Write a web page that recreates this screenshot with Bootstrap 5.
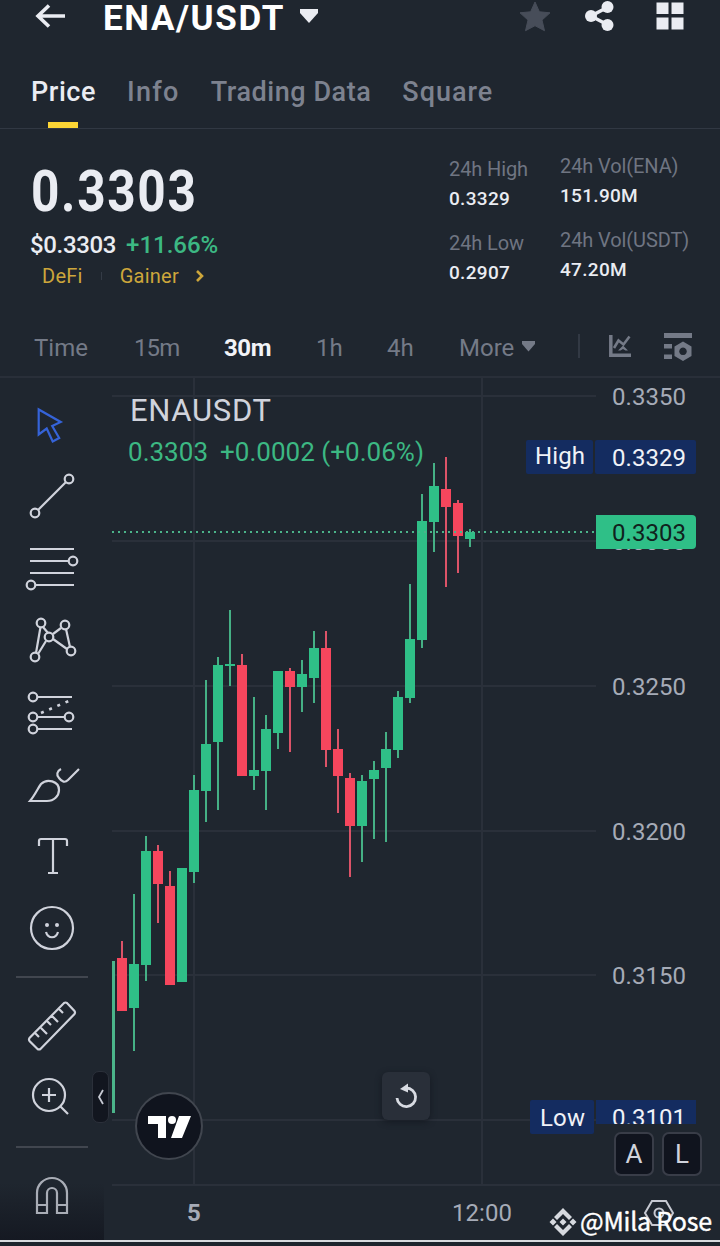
<!DOCTYPE html>
<html lang="en">
<head>
<meta charset="utf-8">
<meta name="viewport" content="width=device-width, initial-scale=1">
<title>ENA/USDT</title>
<link rel="stylesheet" href="https://cdn.jsdelivr.net/npm/bootstrap@5.3.0/dist/css/bootstrap.min.css">
<style>
  body { background: #1f262f; color: #eaecf2; font-family: Roboto, "Noto Sans", sans-serif; width: 720px; height: 1246px; overflow: hidden; }
  svg { display: block; flex: none; }
  .topbar { height: 36px; padding-left: 34px; }
  .pair { font-size: 35px; font-weight: 700; line-height: 34px; color: #fff; width: 190px; margin-left: 37px; padding-top: 2px; letter-spacing: 1.6px; white-space: nowrap; }
  .tabs { height: 93px; border-bottom: 1px solid #313843; padding: 0 31px; gap: 31px; }
  .tabs a { color: #7d828f; font-size: 27px; line-height: 36px; font-weight: 500; padding: 38px 0 0; letter-spacing: .55px; white-space: nowrap; }
  .tabs a.active { color: #eaecf2; position: relative; }
  .tabs a.active::after { content: ""; position: absolute; left: 17px; bottom: 0; width: 30px; height: 6px; background: #fcd535; }
  .tabs .info { letter-spacing: 1.3px; }
  .tabs .square { letter-spacing: 1px; }
  .summary { height: 187px; padding: 32px 0 0 31px; }
  .last { font-size: 57px; font-weight: 700; line-height: 60px; padding-top: 1px; letter-spacing: 1.9px; transform: scaleX(.87); transform-origin: 0 0; }
  .sub { font-size: 24px; line-height: 30px; font-weight: 500; margin: 8px 0 0 -1px; letter-spacing: -.35px; }
  .sub .up { letter-spacing: 0; }
  .up { color: #3cb883; }
  .tags { color: #cda63b; font-size: 20px; line-height: 30px; padding-left: 11px; margin-top: 1px; letter-spacing: .25px; }
  .rule { width: 1px; height: 8px; background: #343b46; margin: 0 18px; }
  .stat { font-size: 20px; line-height: 28px; color: #6f7582; white-space: nowrap; height: 74px; letter-spacing: -.1px; }
  .stat b { display: block; font-weight: 500; color: #eaecf2; font-size: 19px; line-height: 31px; letter-spacing: .3px; }
  .frames { height: 62px; border-bottom: 2px solid #292f39; color: #747a87; font-size: 24px; line-height: 36px; padding: 14px 0 0 34px; }
  .frames span { flex: none; }
  .frames .m15 { letter-spacing: -.9px; }
  .frames .on { color: #f2f3f7; font-weight: 700; letter-spacing: -.4px; }
  .tools { width: 104px; height: 862px; padding-top: 10px; background: linear-gradient(#1f262f 0, #1f262f 805px, #151922 862px); }
  .tools hr { margin: 12px 16px; border: 0; height: 2px; background: #41464f; opacity: 1; }
  .tools svg { fill: none; stroke: #d0d3dc; stroke-width: 2.2; }
  .foot { height: 6px; border-top: 2px solid #d8dade; background: #1d242d; }
  .round-logo { left: 135px; top: 714px; width: 68px; height: 68px; border: 2px solid #41464f; background: #10141e; }
  .reset { left: 382px; top: 694px; width: 48px; height: 48px; border-radius: 6px; background: #292f39; box-shadow: 0 2px 6px #151a22; }
  .handle { left: 92px; top: 693px; width: 17px; height: 52px; border-radius: 7px; background: #12161f; border: 1px solid #2b303a; }
  .key { top: 754px; width: 40px; height: 44px; border: 2px solid #393d48; border-radius: 7px; background: #10141e; color: #d0d3dc; font-size: 26px; line-height: 40px; }
</style>
</head>
<body class="m-0">
<header class="topbar d-flex align-items-center">
  <svg width="32" height="36" viewBox="34 0 32 36" fill="none" stroke="#eaecf2" stroke-width="3.6"><path d="M65 16H38M49 5.500L38 16l11 10.500"/></svg>
  <div class="pair">ENA/USDT</div>
  <svg width="26" height="36" viewBox="293 0 26 36"><path d="M300 9h18v4l-9 10-9-10z" fill="#eaecf2"/></svg>
  <svg class="ms-auto" width="204" height="36" viewBox="516 0 204 36">
    <path d="M535 2l4.400 9.800 10.600 1-8 7.300 2.500 10.600-9.500-5-9.500 5 2.500-10.600-8-7.300 10.600-1z" fill="#474d59" stroke="#474d59" stroke-linejoin="round"/>
    <path d="M608 7L591 16l17 9" fill="none" stroke="#eaecf2" stroke-width="3.500"/>
    <g fill="#eaecf2"><circle cx="607.500" cy="7" r="6"/><circle cx="591" cy="16" r="6"/><circle cx="607.500" cy="25" r="6"/>
    <path d="M656.500 2.500h12v11.500h-12zM671.500 2.500h12v11.500h-12zM656.500 17.500h12v12h-12zM671.500 17.500h12v12h-12z"/></g>
  </svg>
</header>
<nav class="tabs nav flex-nowrap">
  <a class="nav-link active">Price</a><a class="nav-link info">Info</a><a class="nav-link">Trading Data</a><a class="nav-link square">Square</a>
</nav>
<section class="summary d-flex">
  <div style="width:418px">
    <div class="last">0.3303</div>
    <div class="sub d-flex"><span>$0.3303</span><span class="up" style="margin-left:10px">+11.66%</span></div>
    <div class="tags d-flex align-items-center"><span>DeFi</span><span class="rule"></span><span>Gainer</span>
      <svg class="ms-3" width="10" height="14" viewBox="0 0 10 14" fill="none" stroke="#cda63b" stroke-width="2.600"><path d="M2 2l5 5-5 5"/></svg></div>
  </div>
  <div style="width:111px">
    <div class="stat" style="margin-top:-6px">24h High<b>0.3329</b></div>
    <div class="stat">24h Low<b>0.2907</b></div>
  </div>
  <div>
    <div class="stat" style="margin-top:-9px">24h Vol(ENA)<b>151.90M</b></div>
    <div class="stat">24h Vol(USDT)<b>47.20M</b></div>
  </div>
</section>
<div class="frames d-flex">
  <span style="width:100px">Time</span><span class="m15" style="width:90px">15m</span><span class="on" style="width:92px">30m</span><span style="width:71px">1h</span><span style="width:72px">4h</span><span style="width:62px">More</span>
  <svg width="199" height="46" viewBox="521 330 199 46">
    <path d="M522 341h13v3l-6.500 7.500L522 344z" fill="#747a87"/><path d="M579 334v24" stroke="#3a414c" stroke-width="1.500"/>
    <path d="M610.800 335v20.200H631" fill="none" stroke="#747a87" stroke-width="3.500"/><path d="M614 348l4.500-7.500 5 4 6-8" fill="none" stroke="#747a87" stroke-width="2.600"/><path d="M618 350.500l5-5 5 5-2.500 0-2.500-1.500-2.500 1.500z" fill="#747a87"/>
    <path d="M664 333h28v5h-28zM664 344h8v4.500h-8zM664 354.500h8v4.500h-8z" fill="#747a87"/>
    <path fill-rule="evenodd" d="M683 341.500l8.500 5v9.500l-8.500 5-8.500-5v-9.500zM683 347.500a3.800 3.800 0 1 0 .01 0z" fill="#747a87"/>
  </svg>
</div>
<main class="d-flex position-relative">
  <aside class="tools d-flex flex-column">
    <svg width="104" height="72" viewBox="0 388 104 72" style="stroke:#3563d8"><path d="M38.700 409.500v25l8-6 6 13 6.500-3.500-7-12 8.500-4z"/></svg>
    <svg width="104" height="72" viewBox="0 460 104 72"><path d="M38 510l28-28"/><circle cx="35" cy="513" r="4.300"/><circle cx="69" cy="479" r="4.300"/></svg>
    <svg width="104" height="72" viewBox="0 532 104 72"><path d="M30 549h44M30 561h38M30 573h44M36 585h38"/><circle cx="73" cy="561" r="4.300"/><circle cx="31" cy="585" r="4.300"/></svg>
    <svg width="104" height="72" viewBox="0 604 104 72"><path d="M40.500 627L36 653M43 627l5 6M38 654l8-13M53 634l8-6M66 629l4 18M53 639l14 10"/><circle cx="41" cy="623" r="4.300"/><circle cx="65" cy="625" r="4.300"/><circle cx="49" cy="637" r="4.300"/><circle cx="35" cy="657" r="4.300"/><circle cx="71" cy="651" r="4.300"/></svg>
    <svg width="104" height="72" viewBox="0 676 104 72"><path d="M37 697h35M37 717h28M37 729h35"/><path d="M41 713l30-13" stroke-width="2.600" stroke-dasharray="3 5.900"/><circle cx="33" cy="697" r="4.300"/><circle cx="33" cy="717" r="4.300"/><circle cx="69" cy="717" r="4.300"/><circle cx="33" cy="729" r="4.300"/></svg>
    <svg width="104" height="72" viewBox="0 748 104 72"><path d="M30 801c5-6 8-13 11-17 6-6 18-3 18 6 0 6-5 11-12 11zM61 769c-4 2-5 6-2 9 3 4 6 5 9 2l11-11"/></svg>
    <svg width="104" height="72" viewBox="0 820 104 72"><path d="M39 846v-5q0-2 2-2h24q2 0 2 2v5M53 839v34M48 873h10"/></svg>
    <svg width="104" height="72" viewBox="0 892 104 72"><circle cx="52" cy="928" r="21"/><path d="M46 932c2 7 10 7 12 0"/><circle cx="47" cy="925" r="2" fill="#d0d3dc" stroke="none"/><circle cx="57" cy="925" r="2" fill="#d0d3dc" stroke="none"/></svg>
    <hr>
    <svg width="104" height="72" viewBox="0 990 104 72"><path d="M64 1003q1.500-1 3 0l7.500 8q1 1.500 0 3l-34 35q-1.500 1-3 0l-8-8q-1-1.500 0-3zM35 1033l4 4M41 1028l6 6M47 1021l4 4M52 1016l6 6M59 1009l4 4"/></svg>
    <svg width="104" height="72" viewBox="0 1062 104 72"><circle cx="49" cy="1095" r="16"/><path d="M42 1095h14M49 1088v14M60 1106l8 8"/></svg>
    <hr>
    <svg width="104" height="72" viewBox="0 1160 104 72" style="stroke:#a9adb6"><path d="M37 1213v-20a15 15 0 0 1 30 0v20H57v-20a5 5 0 0 0-10 0v20zM37 1205h10M57 1205h10"/></svg>
  </aside>
  <svg id="chart" width="616" height="862" viewBox="104 378 616 862" font-family="Roboto, sans-serif" font-size="24">
    <path d="M112 396h484M112 541h484M112 686h484M112 831h484M112 975h484M112 1120h484M112 1185h608M194 378v807M482 378v807" stroke="#2a303a" stroke-width="2"/>
    <g id="candles"></g>
    <path d="M112 532h484" stroke="#4bb48a" stroke-width="2" stroke-dasharray="2 4"/>
    <text x="130" y="421" font-size="31" fill="#d0d3dc" textLength="141">ENAUSDT</text>
    <g font-size="26" fill="#3cb883"><text x="128" y="461" textLength="80">0.3303</text><text x="220" y="461" textLength="204">+0.0002 (+0.06%)</text></g>
    <g fill="#a6abb7"><text x="612" y="405" textLength="74">0.3350</text><text x="612" y="550" textLength="74">0.3300</text><text x="612" y="695" textLength="74">0.3250</text><text x="612" y="840" textLength="74">0.3200</text><text x="612" y="984" textLength="74">0.3150</text>
    <text x="187" y="1221" font-weight="700">5</text><text x="452" y="1221" textLength="60">12:00</text></g>
    <g fill="#142c60"><rect x="526" y="440" width="67" height="34" rx="2"/><rect x="595" y="440" width="101" height="34" rx="2"/><rect x="530" y="1100" width="64" height="34" rx="2"/><rect x="596" y="1100" width="100" height="24"/></g>
    <path d="M596 515h96q4 0 4 4v26q0 4-4 4h-96z" fill="#2fbf87"/>
    <text x="612" y="541" fill="#10221d" textLength="74">0.3303</text>
    <clipPath id="lowclip"><path d="M596 1100h100v24H596z"/></clipPath>
    <g fill="#f0f2f7"><text x="535" y="464" textLength="50">High</text><text x="612" y="466" textLength="74">0.3329</text><text x="540" y="1126" textLength="45">Low</text><text x="612" y="1126" textLength="74" clip-path="url(#lowclip)">0.3101</text></g>
    <g fill="none" stroke="#c6c9d2" stroke-width="2"><path d="M652 1201h14l7 12-7 12h-14l-7-12z"/><circle cx="659" cy="1213" r="4.500"/></g>
    <g transform="translate(563 1222)" fill="#d6d9df"><path d="M0-14L9-5 6-2 0-8-6-2-9-5zM0 14L9 5 6 2 0 8-6 2-9 5zM0-3.500L3.500 0 0 3.500-3.500 0zM-10-3.500L-6.500 0-10 3.500-13.500 0zM10-3.500L13.500 0 10 3.500 6.500 0z"/></g>
    <text x="580" y="1231" font-family="'Noto Sans CJK SC', 'Noto Sans', sans-serif" font-size="25" font-weight="400" fill="#fff" stroke="#fff" stroke-width=".4" textLength="132">@Mila Rose</text>
  </svg>
  <div class="handle position-absolute"><svg width="15" height="50" fill="none" stroke="#c6c9d2" stroke-width="1.800"><path d="M10 18l-4 7 4 7"/></svg></div>
  <div class="round-logo position-absolute rounded-circle"><svg width="64" height="64" viewBox="137 1094 64 64" fill="#fff"><path d="M148 1116h18v22h-8v-14h-10zM179 1116h12l-9 22h-11z"/><circle cx="172" cy="1120" r="4"/></svg></div>
  <div class="reset position-absolute"><svg width="48" height="48" viewBox="382 1072 48 48"><path d="M397 1098a9.300 9.300 0 1 0 9-10" fill="none" stroke="#d8dbe2" stroke-width="2.800"/><path d="M400 1089l8-5.500v9z" fill="#d8dbe2"/></svg></div>
  <div class="key position-absolute text-center" style="left:614px">A</div>
  <div class="key position-absolute text-center" style="left:662px">L</div>
</main>
<footer class="foot"></footer>
<script src="https://cdn.jsdelivr.net/npm/bootstrap@5.3.0/dist/js/bootstrap.bundle.min.js"></script>
<script>
  // One row per candle: x, wick top, wick bottom, body top, body bottom, rising
  const candles = [
    [122,941,1011,958,1011,0],[134,894,1051,964,1008,1],[146,836,981,851,965,1],[158,845,923,851,884,0],
    [170,871,985,886,985,0],[182,868,982,868,982,1],[194,775,883,790,872,1],[206,680,822,744,791,1],
    [218,657,810,665,742,1],[230,610,686,664,666,1],[242,654,776,665,776,0],[254,697,790,770,776,1],
    [266,715,810,729,771,1],[278,671,749,671,733,1],[290,668,752,671,687,0],[302,660,712,674,687,1],
    [314,631,703,648,678,1],[326,631,767,648,750,0],[338,729,813,749,776,0],[350,773,877,778,826,0],
    [362,775,862,781,826,1],[374,761,839,770,779,1],[386,732,842,749,768,1],[398,691,758,697,750,1],
    [410,584,703,639,698,1],[422,494,648,521,640,1],[434,463,552,486,522,1],[446,457,587,489,507,0],
    [458,500,573,503,536,0],[470,529,547,532,539,1]];
  document.getElementById('candles').innerHTML =
    '<rect x="112" y="961" width="3" height="152" fill="#4bb48a"/>' +
    candles.map(([x, h, l, t, b, up]) =>
      `<rect x="${x - 1}" y="${h}" width="2" height="${l - h}" fill="${up ? '#45b085' : '#dc5368'}"/>` +
      `<rect x="${x - 5}" y="${t}" width="10" height="${b - t}" fill="${up ? '#2fbf87' : '#f6465d'}"/>`).join('');
</script>
</body>
</html>
